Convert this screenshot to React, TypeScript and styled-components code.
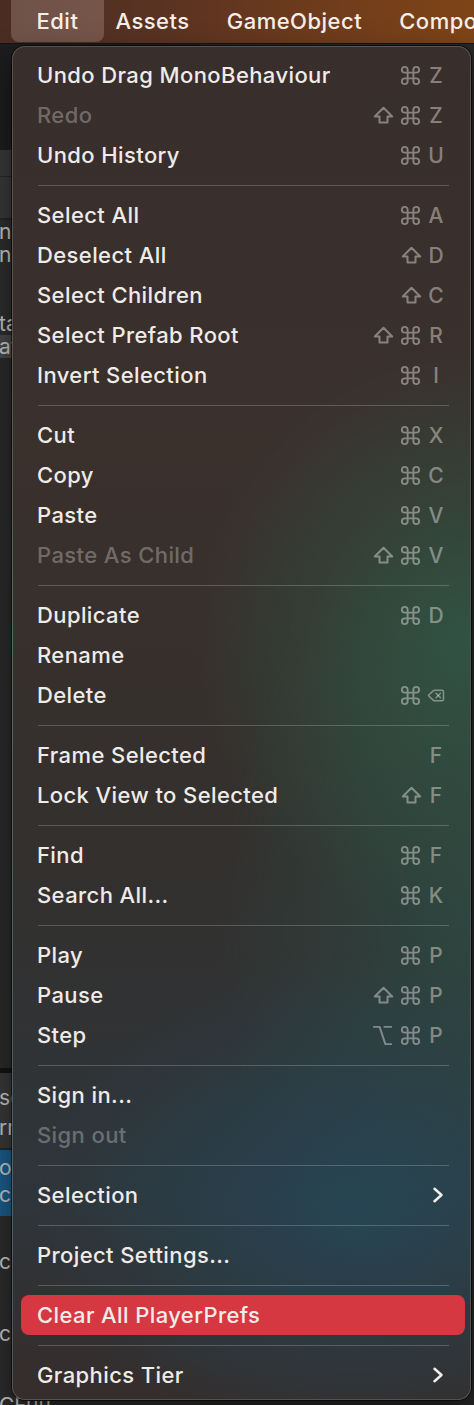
import styled, { createGlobalStyle } from 'styled-components'
import { Command, Option, Delete } from 'lucide-react'

const GlobalStyle = createGlobalStyle`
  html, body {
    margin: 0;
    padding: 0;
    background: #262626;
  }
  body {
    font-family: Inter, "Noto Sans", "Liberation Sans", sans-serif;
    -webkit-font-smoothing: antialiased;
  }
`

type Mod = 'cmd' | 'shift' | 'opt'

type Entry =
  | { kind: 'sep' }
  | {
      kind: 'item'
      label: string
      mods?: Mod[]
      keyName?: string
      disabled?: boolean
      active?: boolean
      submenu?: boolean
    }

const sep: Entry = { kind: 'sep' }
const item = (
  label: string,
  mods: Mod[] = [],
  keyName?: string,
  extra: Partial<{ disabled: boolean; active: boolean; submenu: boolean }> = {}
): Entry => ({ kind: 'item', label, mods, keyName, ...extra })

const entries: Entry[] = [
  item('Undo Drag MonoBehaviour', ['cmd'], 'Z'),
  item('Redo', ['shift', 'cmd'], 'Z', { disabled: true }),
  item('Undo History', ['cmd'], 'U'),
  sep,
  item('Select All', ['cmd'], 'A'),
  item('Deselect All', ['shift'], 'D'),
  item('Select Children', ['shift'], 'C'),
  item('Select Prefab Root', ['shift', 'cmd'], 'R'),
  item('Invert Selection', ['cmd'], 'I'),
  sep,
  item('Cut', ['cmd'], 'X'),
  item('Copy', ['cmd'], 'C'),
  item('Paste', ['cmd'], 'V'),
  item('Paste As Child', ['shift', 'cmd'], 'V', { disabled: true }),
  sep,
  item('Duplicate', ['cmd'], 'D'),
  item('Rename'),
  item('Delete', ['cmd'], 'DEL'),
  sep,
  item('Frame Selected', [], 'F'),
  item('Lock View to Selected', ['shift'], 'F'),
  sep,
  item('Find', ['cmd'], 'F'),
  item('Search All...', ['cmd'], 'K'),
  sep,
  item('Play', ['cmd'], 'P'),
  item('Pause', ['shift', 'cmd'], 'P'),
  item('Step', ['opt', 'cmd'], 'P'),
  sep,
  item('Sign in...'),
  item('Sign out', [], undefined, { disabled: true }),
  sep,
  item('Selection', [], undefined, { submenu: true }),
  sep,
  item('Project Settings...'),
  sep,
  item('Clear All PlayerPrefs', [], undefined, { active: true }),
  sep,
  item('Graphics Tier', [], undefined, { submenu: true }),
]

// panels of the editor that peek out left of the dropdown
const sidebarBlocks = [
  { h: 106, bg: '#1d1d1d', lines: [] as string[], lh: 23, pt: 0 },
  { h: 26, bg: '#393939', lines: [], lh: 23, pt: 0 },
  { h: 1, bg: '#262626', lines: [], lh: 23, pt: 0 },
  { h: 41, bg: '#383838', lines: [], lh: 23, pt: 0 },
  { h: 2, bg: '#262626', lines: [], lh: 23, pt: 0 },
  { h: 115, bg: '#2d2d2d', lines: ['name', 'nav', '', '', 'tag'], lh: 23, pt: 0 },
  { h: 23, bg: '#474747', lines: ['at'], lh: 23, pt: 0 },
  { h: 710, bg: '#2a2a2a', lines: [], lh: 23, pt: 0 },
  { h: 5, bg: '#141414', lines: [], lh: 23, pt: 0 },
  { h: 75, bg: '#383838', lines: ['so', 'rr'], lh: 30, pt: 10 },
  { h: 2, bg: '#262626', lines: [], lh: 23, pt: 0 },
  { h: 66, bg: '#1b5b8a', lines: ['ot', 'co'], lh: 27, pt: 4 },
  { h: 189, bg: '#2c2c2c', lines: ['', 'cc', '', '', 'cc', '', '', 'CFuu'], lh: 24, pt: 10 },
]

const ShiftGlyph = () => (
  <svg width="21" height="18" viewBox="0 0 21 18" fill="none" stroke="currentColor" strokeWidth="2" strokeLinejoin="round">
    <path d="M6.5 16.5V10.5H1.8L10.5 1.8L19.2 10.5H14.5V16.5Z" />
  </svg>
)

const ChevronGlyph = () => (
  <svg width="12" height="16" viewBox="0 0 12 16" fill="none" stroke="currentColor" strokeWidth="2.5" strokeLinecap="round" strokeLinejoin="round">
    <path d="M2.5 1.8L9.5 8L2.5 14.2" />
  </svg>
)

const ShortcutGlyph = ({ mod }: { mod: Mod }) => {
  if (mod === 'cmd') return <Command size={23} strokeWidth={2} />
  if (mod === 'opt') return <Option size={23} strokeWidth={2} />
  return <ShiftGlyph />
}

export default function App() {
  return (
    <Screen>
      <GlobalStyle />
      <MenuBar>
        <BarItem $active>Edit</BarItem>
        <BarItem>Assets</BarItem>
        <BarItem>GameObject</BarItem>
        <BarItem>Component</BarItem>
      </MenuBar>

      <Workspace>
        <Sidebar>
          {sidebarBlocks.map((b, i) => (
            <SideBlock key={i} $h={b.h} $bg={b.bg} $pt={b.pt}>
              {b.lines.map((l, j) => (
                <SideLine key={j} $lh={b.lh}>
                  {l}
                </SideLine>
              ))}
            </SideBlock>
          ))}
        </Sidebar>
      </Workspace>

      <Menu>
        {entries.map((e, i) =>
          e.kind === 'sep' ? (
            <Separator key={i} />
          ) : (
            <Row key={i} $active={e.active}>
              <Label $disabled={e.disabled}>{e.label}</Label>
              {e.submenu ? (
                <Chevron>
                  <ChevronGlyph />
                </Chevron>
              ) : (
                <Shortcut>
                  {e.mods?.map((m) => (
                    <ModKey key={m}>
                      <ShortcutGlyph mod={m} />
                    </ModKey>
                  ))}
                  {e.keyName && (
                    <KeyCell>
                      {e.keyName === 'DEL' ? <Delete size={23} strokeWidth={2} /> : e.keyName}
                    </KeyCell>
                  )}
                </Shortcut>
              )}
            </Row>
          )
        )}
      </Menu>
    </Screen>
  )
}

const Screen = styled.div`
  position: relative;
  width: 474px;
  height: 1405px;
  overflow: hidden;
  display: flex;
  flex-direction: column;
  background: #262626;
`

const MenuBar = styled.div`
  height: 44px;
  flex-shrink: 0;
  display: flex;
  align-items: stretch;
  padding-left: 18px;
  background: linear-gradient(90deg, #4a2c23 0%, #5a3322 35%, #6d3b1c 65%, #7e4417 100%);
  border-bottom: 1px solid #171310;
  box-sizing: border-box;
`

const BarItem = styled.div<{ $active?: boolean }>`
  position: relative;
  display: flex;
  align-items: center;
  padding: 0 18.5px 2px;
  font-size: 22px;
  font-weight: 550;
  letter-spacing: 0.5px;
  color: #f6efe9;
  white-space: nowrap;

  &::before {
    content: '';
    display: ${(p) => (p.$active ? 'block' : 'none')};
    position: absolute;
    top: -8px;
    bottom: 1px;
    left: -7px;
    right: -7px;
    border-radius: 8px;
    background: rgba(255, 235, 225, 0.2);
  }
`

const Workspace = styled.div`
  flex: 1;
  display: flex;
`

const Sidebar = styled.div`
  width: 200px;
  display: flex;
  flex-direction: column;
`

const SideBlock = styled.div<{ $h: number; $bg: string; $pt: number }>`
  height: ${(p) => p.$h}px;
  flex-shrink: 0;
  background: ${(p) => p.$bg};
  display: flex;
  flex-direction: column;
  padding-top: ${(p) => p.$pt}px;
  box-sizing: border-box;
  overflow: hidden;
`

const SideLine = styled.div<{ $lh: number }>`
  height: ${(p) => p.$lh}px;
  line-height: ${(p) => p.$lh}px;
  flex-shrink: 0;
  font-size: 21px;
  color: #c4c4c4;
  margin-left: -1px;
`

const Menu = styled.div`
  position: absolute;
  top: 46px;
  left: 12px;
  width: 459px;
  padding: 8px 5px 4px 8px;
  box-sizing: border-box;
  border-radius: 13px;
  border: 1px solid rgba(255, 255, 255, 0.17);
  box-shadow: 0 0 0 1px rgba(0, 0, 0, 0.55), 0 12px 30px rgba(0, 0, 0, 0.5);
  background:
    radial-gradient(ellipse 60% 22% at 100% 44%, rgba(48, 88, 70, 0.85), rgba(48, 88, 70, 0) 100%),
    radial-gradient(ellipse 70% 18% at 75% 86%, rgba(38, 70, 86, 0.9), rgba(38, 70, 86, 0) 100%),
    radial-gradient(ellipse 55% 30% at 100% 65%, rgba(44, 78, 70, 0.7), rgba(44, 78, 70, 0) 100%),
    linear-gradient(180deg, #382e2b 0%, #3a302c 30%, #33302e 60%, #2e353a 85%, #352d2b 100%);
  display: flex;
  flex-direction: column;
`

const Row = styled.div<{ $active?: boolean }>`
  height: 40px;
  display: flex;
  align-items: center;
  justify-content: space-between;
  padding: 0 20px 0 16px;
  border-radius: 8px;
  background: ${(p) => (p.$active ? '#d63842' : 'transparent')};
`

const Label = styled.span<{ $disabled?: boolean }>`
  font-size: 22px;
  font-weight: 450;
  letter-spacing: 0.4px;
  color: ${(p) => (p.$disabled ? 'rgba(255, 255, 255, 0.3)' : '#efebe8')};
  white-space: nowrap;
`

const Shortcut = styled.div`
  display: flex;
  align-items: center;
  gap: 5px;
  color: rgba(236, 232, 230, 0.45);
`

const ModKey = styled.span`
  display: flex;
  align-items: center;
  justify-content: center;
`

const KeyCell = styled.span`
  width: 18px;
  display: flex;
  justify-content: center;
  font-size: 21px;
  font-weight: 450;
`

const Chevron = styled.span`
  display: flex;
  color: #f2eeec;
  margin-right: 1px;
`

const Separator = styled.div`
  height: 20px;
  display: flex;
  align-items: center;
  padding: 0 16px 0 17px;

  &::after {
    content: '';
    flex: 1;
    height: 1px;
    background: rgba(255, 255, 255, 0.2);
  }
`
